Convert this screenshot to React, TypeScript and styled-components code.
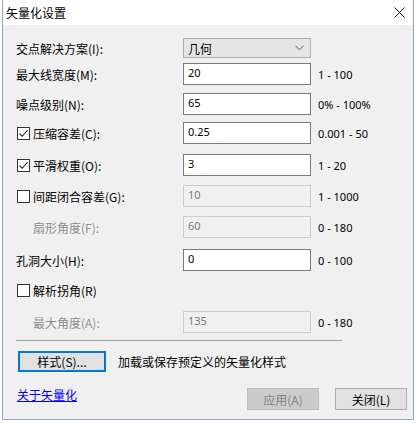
import React from "react";
import styled, { createGlobalStyle } from "styled-components";

const Global = createGlobalStyle`
  html, body { margin: 0; padding: 0; background: #ffffff; }
  body { font-family: "Noto Sans CJK SC", "Noto Sans", sans-serif; }
`;

const CJK = `"Noto Sans CJK SC", "Noto Sans", sans-serif`;
const LATIN = `"Noto Sans", "Open Sans", sans-serif`;

const Window = styled.div`
  margin-left: 2px;
  width: 412px;
  height: 420px;
  box-sizing: border-box;
  border: 1px solid #8ea6c2;
  border-top: none;
  background: #f0f0f0;
  display: flex;
  flex-direction: column;
`;

const TitleBar = styled.div`
  height: 25px;
  background: #ffffff;
  display: flex;
  align-items: center;
  justify-content: space-between;
  padding: 0 8px 0 3px;
`;

const Title = styled.span`
  font-family: ${CJK};
  font-size: 12px;
  color: #000;
`;

const CloseIcon = styled.svg`
  width: 11px;
  height: 11px;
`;

const Content = styled.div`
  display: flex;
  flex-direction: column;
  padding: 0 6px 0 13px;
  flex: 1;
`;

const Row = styled.div<{ $mt: number }>`
  margin-top: ${(p) => p.$mt}px;
  height: 22px;
  display: grid;
  grid-template-columns: 167px 128px auto;
  align-items: center;
`;

const Label = styled.label<{ $indent?: boolean; $disabled?: boolean }>`
  font-family: ${CJK};
  font-size: 12px;
  color: ${(p) => (p.$disabled ? "#8d8d8d" : "#000")};
  padding-left: ${(p) => (p.$indent ? "17px" : "0")};
  display: flex;
  align-items: center;
  white-space: nowrap;
`;

const Box = styled.span`
  width: 13px;
  height: 13px;
  box-sizing: border-box;
  border: 1px solid #333333;
  background: #ffffff;
  margin-left: 1px;
  margin-right: 3px;
  display: inline-flex;
  align-items: center;
  justify-content: center;
`;

const Input = styled.div<{ $disabled?: boolean }>`
  height: 22px;
  box-sizing: border-box;
  border: 1px solid ${(p) => (p.$disabled ? "#cccccc" : "#7a7a7a")};
  background: ${(p) => (p.$disabled ? "#f0f0f0" : "#ffffff")};
  color: ${(p) => (p.$disabled ? "#7a7a7a" : "#000")};
  font-family: ${LATIN};
  font-size: 11px;
  padding: 0 4px;
  display: flex;
  align-items: center;
  line-height: 1;
  padding-bottom: 3px;
`;

const Combo = styled.div`
  height: 20px;
  box-sizing: border-box;
  border: 1px solid #adadad;
  background: #e5e5e5;
  font-family: ${CJK};
  font-size: 12px;
  color: #000;
  padding: 0 6px 0 4px;
  display: flex;
  align-items: center;
  justify-content: space-between;
`;

const Range = styled.span`
  font-family: ${LATIN};
  font-size: 11px;
  color: #000;
  padding-left: 7px;
  white-space: nowrap;
`;

const Separator = styled.div`
  margin-top: 7px;
  height: 1px;
  width: 326px;
  background: #a0a0a0;
`;

const StyleRow = styled.div`
  margin-top: 10px;
  display: flex;
  align-items: center;
  gap: 12px;
`;

const Button = styled.button<{ $default?: boolean; $disabled?: boolean }>`
  height: ${(p) => (p.$default ? "21px" : "22px")};
  width: ${(p) => (p.$default ? "88px" : "72px")};
  box-sizing: border-box;
  border: ${(p) =>
    p.$default ? "2px solid #0078d7" : p.$disabled ? "1px solid #bfbfbf" : "1px solid #adadad"};
  background: ${(p) => (p.$disabled ? "#cccccc" : "#e1e1e1")};
  color: ${(p) => (p.$disabled ? "#838383" : "#000")};
  font-family: ${CJK};
  font-size: 12px;
  padding: 0;
  margin-left: ${(p) => (p.$default ? "2px" : "0")};
  display: flex;
  align-items: center;
  justify-content: center;
`;

const Desc = styled.span`
  font-family: ${CJK};
  font-size: 12px;
  color: #000;
`;

const Footer = styled.div`
  margin-top: 16px;
  display: flex;
  align-items: center;
  justify-content: space-between;
`;

const Link = styled.a`
  font-family: ${CJK};
  font-size: 12px;
  color: #0000ee;
  text-decoration: underline;
  margin-left: 1px;
  margin-top: -10px;
`;

const Buttons = styled.div`
  display: flex;
  gap: 16px;
`;

const Check = ({ checked }: { checked: boolean }) => (
  <Box>
    {checked && (
      <svg width="11" height="11" viewBox="0 0 11 11">
        <path d="M1.5 5.5 L4.2 8.3 L9.6 2.2" fill="none" stroke="#222" strokeWidth="1.1" />
      </svg>
    )}
  </Box>
);

type RowDef = {
  mt: number;
  label: string;
  check?: boolean;
  checked?: boolean;
  indent?: boolean;
  disabled?: boolean;
  value?: string;
  range?: string;
};

const rows: RowDef[] = [
  { mt: 4, label: "最大线宽度(M):", value: "20", range: "1 - 100" },
  { mt: 8, label: "噪点级别(N):", value: "65", range: "0% - 100%" },
  { mt: 7, label: "压缩容差(C):", check: true, checked: true, value: "0.25", range: "0.001 - 50" },
  { mt: 10, label: "平滑权重(O):", check: true, checked: true, value: "3", range: "1 - 20" },
  { mt: 9, label: "间距闭合容差(G):", check: true, checked: false, value: "10", disabled: true, range: "1 - 1000" },
  { mt: 9, label: "扇形角度(F):", indent: true, value: "60", disabled: true, range: "0 - 180" },
  { mt: 11, label: "孔洞大小(H):", value: "0", range: "0 - 100" },
  { mt: 8, label: "解析拐角(R)", check: true, checked: false },
  { mt: 10, label: "最大角度(A):", indent: true, value: "135", disabled: true, range: "0 - 180" },
];

export default function App() {
  return (
    <>
      <Global />
      <Window>
        <TitleBar>
          <Title>矢量化设置</Title>
          <CloseIcon viewBox="0 0 11 11">
            <path d="M0.5 0.5 L10.5 10.5 M10.5 0.5 L0.5 10.5" stroke="#111" strokeWidth="1" />
          </CloseIcon>
        </TitleBar>
        <Content>
          <Row $mt={12}>
            <Label>交点解决方案(I):</Label>
            <Combo>
              <span>几何</span>
              <svg width="9" height="6" viewBox="0 0 9 6">
                <path d="M0.5 0.8 L4.5 4.8 L8.5 0.8" fill="none" stroke="#606060" strokeWidth="1" />
              </svg>
            </Combo>
            <span />
          </Row>
          {rows.map((r) => (
            <Row $mt={r.mt} key={r.label}>
              <Label $indent={r.indent} $disabled={r.indent && r.disabled}>
                {r.check && <Check checked={!!r.checked} />}
                {r.label}
              </Label>
              {r.value !== undefined ? <Input $disabled={r.disabled}>{r.value}</Input> : <span />}
              {r.range ? <Range>{r.range}</Range> : <span />}
            </Row>
          ))}
          <Separator />
          <StyleRow>
            <Button $default>样式(S)...</Button>
            <Desc>加载或保存预定义的矢量化样式</Desc>
          </StyleRow>
          <Footer>
            <Link href="#">关于矢量化</Link>
            <Buttons>
              <Button $disabled>应用(A)</Button>
              <Button>关闭(L)</Button>
            </Buttons>
          </Footer>
        </Content>
      </Window>
    </>
  );
}
